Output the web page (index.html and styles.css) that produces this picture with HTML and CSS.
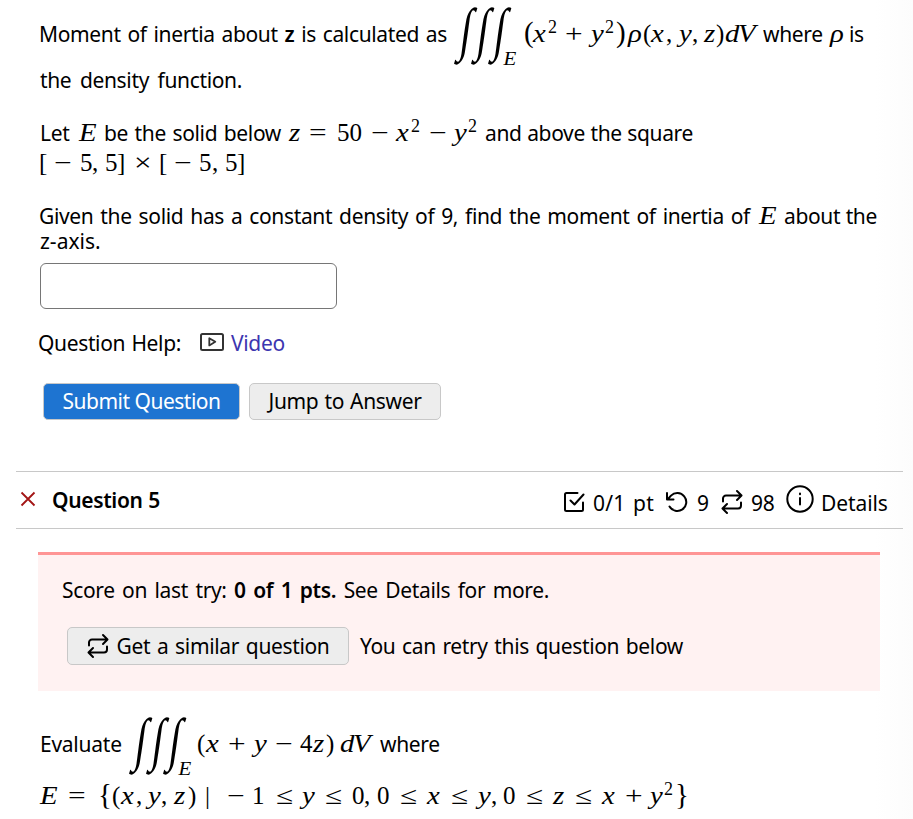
FILE: index.html
```
<!DOCTYPE html>
<html lang="en">
<head>
    <meta charset="UTF-8">
    <title>Question 5</title>
    <link rel="stylesheet" href="styles.css">
</head>
<body>

<div class="question">
    <div class="row row-inertia">
        <span class="text t-moment">Moment of inertia about <b>z</b> is calculated as</span>
        <span class="integral"><span>∫</span><span>∫</span><span>∫</span><i>E</i></span>
        <span class="math m-inertia"><span class="big">(</span><i>x</i><sup>2</sup><span class="op">+</span><i>y</i><sup>2</sup><span class="big">)</span><i>ρ</i><span>(</span><i>x</i><span>,</span><i>y</i><span>,</span><i>z</i><span>)</span><i>d</i><i>V</i></span>
        <span class="text t-where">where</span>
        <span class="math m-rho"><i>ρ</i></span>
        <span class="text">is</span>
    </div>
    <div class="row row-density">
        <span class="text t-density">the density function.</span>
    </div>
    <div class="row row-solid">
        <span class="text t-let">Let</span>
        <span class="math m-e"><i>E</i></span>
        <span class="text t-below">be the solid below</span>
        <span class="math m-solid"><i>z</i><span class="op">=</span><span>50</span><span class="op">−</span><i>x</i><sup>2</sup><span class="op">−</span><i>y</i><sup>2</sup></span>
        <span class="text t-above">and above the square</span>
    </div>
    <div class="row row-square">
        <span class="math m-square"><span>[</span><span class="op">−</span><span>5</span><span>,</span><span>5</span><span>]</span><span class="op">×</span><span>[</span><span class="op">−</span><span>5</span><span>,</span><span>5</span><span>]</span></span>
    </div>
    <div class="row row-given">
        <span class="text t-given">Given the solid has a constant density of 9, find the moment of inertia of</span>
        <span class="math m-e"><i>E</i></span>
        <span class="text t-about">about the</span>
    </div>
    <div class="row row-axis">
        <span class="text t-axis">z-axis.</span>
    </div>
    <input class="answer" type="text" aria-label="Answer">
    <div class="help">
        <span class="text t-help">Question Help:</span>
        <svg class="video-icon" width="24" height="18" viewBox="0 0 24 18">
            <rect x="1" y="1" width="22" height="16" rx="1.5"/>
            <path d="M9.3 5.2v7.2l6-3.6z"/>
        </svg>
        <a class="text t-video">Video</a>
    </div>
    <div class="buttons">
        <button class="btn primary"><span class="text t-submit">Submit Question</span></button>
        <button class="btn jump"><span class="text t-jump">Jump to Answer</span></button>
    </div>
</div>

<div class="header">
    <svg class="cross" width="16" height="16" viewBox="0 0 16 16"><path d="M1.5 1.5l13 13M14.5 1.5l-13 13"/></svg>
    <b class="text t-title">Question 5</b>
    <div class="stats">
        <svg class="icon check" width="22" height="22" viewBox="0 0 22 22"><path d="M7.5 9.5l4 4L20.5 3.5M20 11.5v7a1.5 1.5 0 0 1-1.5 1.5h-15A1.5 1.5 0 0 1 2 18.5v-15A1.5 1.5 0 0 1 3.5 2H14.5"/></svg>
        <span class="text t-pt">0/1 pt</span>
        <svg class="icon undo" width="24" height="22" viewBox="0 0 24 22"><path d="M2 2v6.5h6.5M2.5 8.5L6 4.6a9 9 0 1 1-1.500 11"/></svg>
        <span class="text t-nine">9</span>
        <svg class="icon repeat" width="22" height="26" viewBox="0 0 22 26"><path d="M16 2l4.5 4.5L16 11M2 12.5V9.5a3 3 0 0 1 3-3h15M6 24l-4.5-4.5L6 15M20 13.5v3a3 3 0 0 1-3 3H2"/></svg>
        <span class="text t-tries">98</span>
        <svg class="icon info" width="28" height="28" viewBox="0 0 28 28"><circle cx="14" cy="14" r="12.7"/><path d="M14 13v6.5M14 8.5v.8"/></svg>
        <span class="text t-details">Details</span>
    </div>
</div>

<div class="score">
    <div class="score-line">
        <span class="text t-score">Score on last try: <b>0 of 1 pts.</b> See Details for more.</span>
    </div>
    <div class="retry">
        <button class="btn similar">
            <svg class="icon repeat" width="22" height="26" viewBox="0 0 22 26"><path d="M16 2l4.5 4.5L16 11M2 12.5V9.5a3 3 0 0 1 3-3h15M6 24l-4.5-4.5L6 15M20 13.5v3a3 3 0 0 1-3 3H2"/></svg>
            <span class="text t-similar">Get a similar question</span>
        </button>
        <span class="text t-retry">You can retry this question below</span>
    </div>
</div>

<div class="question">
    <div class="row row-evaluate">
        <span class="text t-evaluate">Evaluate</span>
        <span class="integral"><span>∫</span><span>∫</span><span>∫</span><i>E</i></span>
        <span class="math m-evaluate"><span>(</span><i>x</i><span class="op">+</span><i>y</i><span class="op">−</span><span>4</span><i>z</i><span>)</span><i>d</i><i>V</i></span>
        <span class="text t-where">where</span>
    </div>
    <div class="row row-region">
        <span class="math m-region"><i>E</i><span class="op">=</span><span class="brace">{</span><span>(</span><i>x</i><span>,</span><i>y</i><span>,</span><i>z</i><span>)</span><span>|</span><span class="op">−</span><span>1</span><span class="op">≤</span><i>y</i><span class="op">≤</span><span>0</span><span>,</span><span>0</span><span class="op">≤</span><i>x</i><span class="op">≤</span><i>y</i><span>,</span><span>0</span><span class="op">≤</span><i>z</i><span class="op">≤</span><i>x</i><span class="op">+</span><i>y</i><sup>2</sup><span class="brace">}</span></span>
    </div>
</div>

</body>
</html>
```

FILE: styles.css
```
* {
    box-sizing: border-box;
}
body {
    margin: 0;
    width: 913px;
    height: 819px;
    overflow: hidden;
    background: linear-gradient(to right, #fff 875px, #fcfcfc 913px);
    font-family: "Noto Sans", sans-serif;
    font-size: 21px;
    color: #000;
}
b {
    font-weight: 600;
}
.question {
    padding-left: 40px;
}

/* text runs */
.text {
    display: block;
    flex: none;
    white-space: nowrap;
    letter-spacing: -0.35px;
    text-align: left;
    text-align-last: justify;
}
.row {
    display: flex;
    align-items: baseline;
}
.row-inertia {
    height: 68px;
    line-height: 67px;
}
.row-density {
    height: 24px;
    line-height: 24px;
}
.row-solid {
    margin-top: 24px;
    height: 33px;
    line-height: 33px;
}
.row-square {
    height: 28px;
    line-height: 28px;
}
.row-given {
    margin-top: 24px;
    height: 28px;
    line-height: 30px;
}
.row-axis {
    height: 22px;
    line-height: 24px;
}
.t-moment { width: 408px; margin-left: -1px; }
.t-where { width: 60px; margin-left: 7px; }
.t-density { width: 202px; }
.t-let { width: 30px; }
.t-below { width: 177px; }
.t-above { width: 208px; margin-left: 8px; }
.t-given { width: 711px; margin-left: -1px; }
.t-about { width: 93px; }
.t-axis { width: 62px; letter-spacing: 0; }
.t-help { width: 143px; }
.t-submit { width: 158px; letter-spacing: -0.5px; }
.t-jump { width: 153px; }
.t-title { width: 108px; }
.t-pt { width: 61px; letter-spacing: 0.2px; }
.t-details { letter-spacing: -0.1px; }
.t-score { width: 487px; }
.t-similar { width: 213px; }
.t-retry { width: 323px; }
.t-evaluate { width: 82px; letter-spacing: -0.25px; }

/* formulas, one column per symbol */
.math {
    display: grid;
    flex: none;
    align-items: baseline;
    font-family: "Liberation Serif", serif;
    font-size: 25px;
}
.math i {
    transform: scaleX(1.15);
    transform-origin: left;
}
.math .op {
    transform: scaleX(1.25);
    transform-origin: left;
}
.math sup {
    font-size: 18px;
    line-height: 0;
    position: relative;
    top: -9px;
    vertical-align: baseline;
}
.math .big, .math .brace {
    font-size: 29px;
    line-height: 0;
}
.m-inertia {
    grid-template-columns: 9px 15px 17px 26px 14px 11px 12px 15px 8px 15px 13px 13px 12px 12px 9px 13px 18px;
    margin-left: 4px;
}
.m-rho { margin: 0 6px 0 7px; width: 13px; }
.m-e { margin: 0 7px 0 9px; width: 18px; }
.m-solid {
    grid-template-columns: 20px 28px 34px 25px 15px 18px 25px 14px 9px;
    margin-left: 8px;
}
.m-square {
    grid-template-columns: 15px 26px 12px 13px 12px 17px 25px 15px 25px 13px 13px 12px 6px;
    margin-left: -1px;
}
.m-evaluate {
    grid-template-columns: 9px 22px 26px 21px 25px 13px 13px 14px 13px 20px;
    margin-left: 2px;
}
.m-region {
    grid-template-columns: 28px 30px 14px 9px 15px 12px 13px 13px 14px 17px 22px 25px 24px 26px 23px 27px 12px 13px 23px 27px 24px 27px 13px 12px 23px 27px 22px 27px 23px 25px 14px 11px 12px;
}
.integral {
    display: flex;
    flex: none;
    align-items: baseline;
    width: 64px;
    margin-left: 9px;
    font-family: "Liberation Serif", serif;
}
.integral span {
    width: 17px;
    font-size: 46px;
    line-height: 0;
    position: relative;
    top: 3px;
    left: 4px;
    transform: scale(0.9, 1.27) skewX(-11deg);
}
.integral i {
    font-size: 19px;
    line-height: 0;
    position: relative;
    top: 23px;
    left: -3px;
    transform: scaleX(1.1);
}

.answer {
    display: block;
    width: 297px;
    height: 46px;
    margin-top: 12px;
    border: 1px solid #767676;
    border-radius: 6px;
    background: #fff;
}
.help {
    display: flex;
    margin: 20px 0 0 -2px;
    height: 28px;
    line-height: 28px;
}
.video-icon {
    margin: 4px 7px 0 19px;
    fill: none;
    stroke: #333;
    stroke-width: 2;
    stroke-linejoin: round;
}
.video-icon path {
    stroke-width: 1.8;
}
.t-video {
    color: #3c36b0;
}
.buttons {
    display: flex;
    gap: 9px;
    margin: 26px 0 0 3px;
}
.btn {
    display: flex;
    align-items: center;
    justify-content: center;
    height: 37px;
    padding: 0 0 2px;
    border: 1px solid #c8c8c8;
    border-radius: 5px;
    background: #ededed;
    font: inherit;
    color: #000;
}
.primary {
    width: 197px;
    background: #1e74d1;
    color: #fff;
}
.jump {
    width: 192px;
}

/* question title bar */
.header {
    display: flex;
    width: 887px;
    height: 58px;
    margin: 51px 0 0 16px;
    padding-left: 4px;
    border-top: 1px solid #c8c8c8;
    border-bottom: 1px solid #c8c8c8;
    line-height: 56px;
}
.cross {
    margin: 19px 16px 0 0;
    fill: none;
    stroke: #a31515;
    stroke-width: 1.8;
}
.stats {
    display: flex;
    margin-left: 403px;
    line-height: 62px;
}
.icon {
    flex: none;
    fill: none;
    stroke: #000;
    stroke-width: 2;
    stroke-linecap: round;
    stroke-linejoin: round;
}
.check { margin: 19px 8px 0 0; }
.undo { margin: 19px 8px 0 11px; }
.stats .repeat { margin: 17px 8px 0 13px; }
.info { margin: 13px 7px 0 13px; }
.t-nine { width: 11px; }
.t-tries { width: 22px; }

/* score panel */
.score {
    width: 842px;
    height: 139px;
    margin: 23px 0 0 38px;
    padding: 20px 0 0 24px;
    border-top: 3px solid #ff9595;
    background: #fff2f2;
}
.score-line {
    height: 52px;
    line-height: 30px;
}
.retry {
    display: flex;
    align-items: center;
    margin-left: 5px;
}
.similar {
    width: 282px;
    height: 38px;
    margin-right: 11px;
    padding: 0;
}
.similar .repeat {
    margin: 0 8px 1px 0;
}
.t-retry {
    padding-bottom: 1px;
}
.row-evaluate {
    margin-top: 20px;
    height: 67px;
    line-height: 66px;
}
.row-region {
    height: 35px;
    line-height: 35px;
}
```
